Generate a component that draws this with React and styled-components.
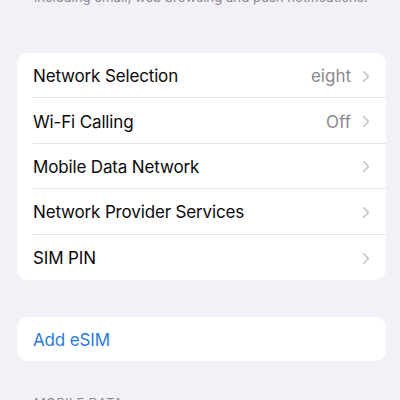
import React from "react";
import styled, { createGlobalStyle } from "styled-components";

const Global = createGlobalStyle`
  html, body { margin: 0; padding: 0; background: #f2f1f7; }
  body { font-family: Inter, "Noto Sans", "Liberation Sans", sans-serif; -webkit-font-smoothing: antialiased; }
`;

const Page = styled.div`
  width: 400px;
  height: 400px;
  overflow: hidden;
  background: #f2f1f7;
  display: flex;
  flex-direction: column;
  & > * { flex-shrink: 0; }
`;

const Footnote = styled.div`
  margin: -12px 0 0;
  padding: 0 34px;
  font-size: 13.2px;
  line-height: 18px;
  color: #8b8a90;
  white-space: nowrap;
`;

const Card = styled.div`
  margin: ${(p) => p.$top}px 14px 0 17px;
  background: #ffffff;
  border-radius: 11px;
  overflow: hidden;
`;

const Row = styled.div`
  height: ${(p) => (p.$h ? p.$h : 45.4)}px;
  display: flex;
  align-items: center;
  padding-left: 16px;
  box-sizing: border-box;
`;

const RowInner = styled.div`
  flex: 1;
  height: 100%;
  display: flex;
  align-items: center;
  padding: 2px 16px 0 0;
  border-bottom: ${(p) => (p.$last ? "none" : "1px solid #e4e3e8")};
  box-sizing: border-box;
`;

const Label = styled.span`
  flex: 1;
  font-size: 17px;
  color: ${(p) => (p.$link ? "#2b7bd5" : "#0a0a0a")};
  letter-spacing: -0.15px;
`;

const Value = styled.span`
  font-size: 17px;
  color: #8b8a90;
  margin-right: 11px;
`;

const Chevron = () => (
  <svg width="8" height="13" viewBox="0 0 8 13" fill="none">
    <path d="M1.8 1.8 L6.4 6.5 L1.8 11.2" stroke="#c4c3c8" strokeWidth="1.6" strokeLinecap="round" strokeLinejoin="round" />
  </svg>
);

const SectionHeader = styled.div`
  margin-top: 34px;
  padding: 0 34px;
  font-size: 13px;
  line-height: 16px;
  color: #8b8a90;
  letter-spacing: 0.3px;
`;

const rows = [
  { label: "Network Selection", value: "eight" },
  { label: "Wi-Fi Calling", value: "Off" },
  { label: "Mobile Data Network" },
  { label: "Network Provider Services" },
  { label: "SIM PIN" },
];

export default function App() {
  return (
    <Page>
      <Global />
      <Footnote>including email, web browsing and push notifications.</Footnote>
      <Card $top={47}>
        {rows.map((r, i) => (
          <Row key={r.label}>
            <RowInner $last={i === rows.length - 1}>
              <Label>{r.label}</Label>
              {r.value && <Value>{r.value}</Value>}
              <Chevron />
            </RowInner>
          </Row>
        ))}
      </Card>
      <Card $top={37}>
        <Row $h={44}>
          <RowInner $last>
            <Label $link>Add eSIM</Label>
          </RowInner>
        </Row>
      </Card>
      <SectionHeader>MOBILE DATA</SectionHeader>
    </Page>
  );
}
